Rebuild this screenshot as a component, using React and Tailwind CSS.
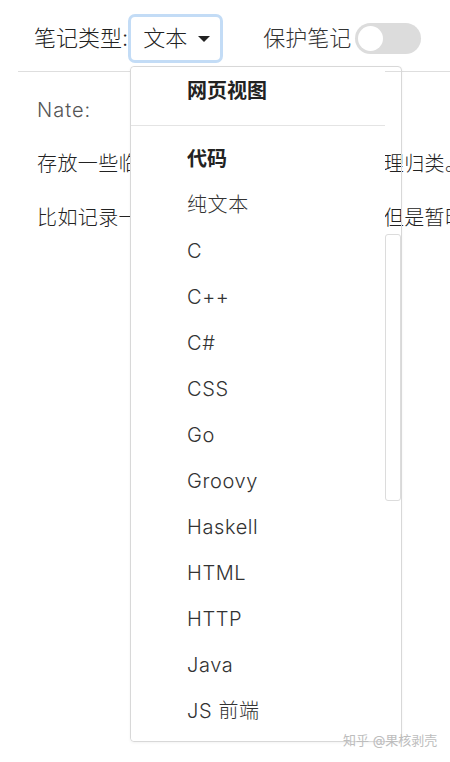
import React from "react";

const items = ["纯文本", "C", "C++", "C#", "CSS", "Go", "Groovy", "Haskell", "HTML", "HTTP", "Java", "JS 前端"];

export default function App() {
  const font = { fontFamily: "Inter, 'Noto Sans CJK SC', sans-serif" };
  return (
    <div className="relative w-[450px] h-[762px] overflow-hidden bg-white text-[#222]" style={font}>
      {/* header */}
      <div className="flex items-center h-[71px] pt-[6px] pl-[34px] text-[22px] whitespace-nowrap">
        <span className="font-light">笔记类型:</span>
        <div className="flex items-center h-[49px] w-[95px] rounded-[7px] border-[3px] border-[#c3dcf6] pl-[12px]">
          <span className="font-light">文本</span>
          <span className="ml-[11px] w-0 h-0 border-l-[6px] border-r-[6px] border-t-[6px] border-l-transparent border-r-transparent border-t-[#222]"></span>
        </div>
        <span className="ml-[40px] font-light text-[#333]">保护笔记</span>
        <div className="ml-[4px] flex items-center w-[66px] h-[31px] rounded-full bg-[#dcdcdc] pl-[3px]">
          <div className="w-[25px] h-[25px] rounded-full bg-white"></div>
        </div>
      </div>
      <div className="ml-[18px] border-t border-[#dedede]"></div>

      {/* body */}
      <div className="pl-[37px] whitespace-nowrap">
        <div className="mt-[23px] text-[20px] tracking-[1px] font-light text-[#555]">Nate:</div>
        <div className="mt-[24px] text-[20px] tracking-[0.4px] font-light">存放一些临时的想法或笔记，之后再整理归类。</div>
        <div className="mt-[24px] text-[20px] tracking-[0.4px] font-light">比如记录一些有用的链接或代码片段，但是暂时没有时间整理</div>
      </div>

      {/* dropdown */}
      <div className="absolute left-[130px] top-[66px] w-[272px] h-[676px] flex rounded-[4px] border border-[#d8d8d8] shadow-[0_1px_3px_rgba(0,0,0,0.05)]">
        <div className="w-[254px] bg-white rounded-l-[4px]">
          <div className="mt-[1px] h-[46px] flex items-center pl-[56px] text-[20px] font-bold text-[#222]">网页视图</div>
          <div className="mt-[11px] border-t border-[#e4e4e4]"></div>
          <div className="mt-[10px] h-[46px] flex items-center pl-[56px] text-[20px] font-bold text-[#222]">代码</div>
          {items.map((t) => (
            <div key={t} className="h-[46px] flex items-center pl-[56px] text-[20px] tracking-[0.6px] font-light text-[#333]">
              {t}
            </div>
          ))}
        </div>
        <div className="flex-1 relative">
          <div className="absolute left-[0px] top-[167px] w-[16px] h-[267px] rounded-[3px] border border-[#dcdcdc] bg-white/60"></div>
        </div>
      </div>

      {/* watermark */}
      <div className="absolute left-[343px] top-[731px] text-[13px] text-[#bdbdbd] whitespace-nowrap">知乎 @果核剥壳</div>
    </div>
  );
}
